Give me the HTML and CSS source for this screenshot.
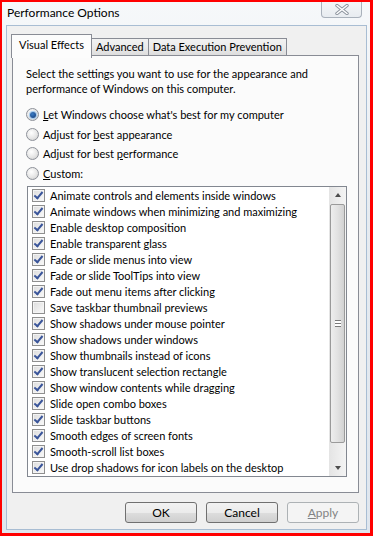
FILE: index.html
```html
<!DOCTYPE html>
<html lang="en">
<head>
    <meta charset="UTF-8">
    <meta name="viewport" content="width=device-width, initial-scale=1.0">
    <title>Performance Options</title>
    <link rel="stylesheet" href="styles.css">
</head>
<body>
    <div class="window">
        <div class="titlebar">
            <span class="title">Performance Options</span>
            <div class="close-btn">
                <svg width="14" height="11" viewBox="0 0 14 11">
                    <path d="M2 1.5 L12 9.5 M12 1.5 L2 9.5" stroke="#8a929c" stroke-width="3.4" stroke-linecap="round" fill="none"/>
                    <path d="M2 1.5 L12 9.5 M12 1.5 L2 9.5" stroke="#ffffff" stroke-width="1.6" stroke-linecap="round" fill="none"/>
                </svg>
            </div>
        </div>

        <div class="client">
            <div class="tabs">
                <div class="tab active">Visual Effects</div>
                <div class="tab">Advanced</div>
                <div class="tab">Data Execution Prevention</div>
            </div>

            <div class="panel">
                <p class="intro">Select the settings you want to use for the appearance and<br>performance of Windows on this computer.</p>

                <div class="options">
                    <div class="opt"><span class="radio checked"></span><span><u>L</u>et Windows choose what's best for my computer</span></div>
                    <div class="opt"><span class="radio"></span><span>Adjust for <u>b</u>est appearance</span></div>
                    <div class="opt"><span class="radio"></span><span>Adjust for best <u>p</u>erformance</span></div>
                    <div class="opt"><span class="radio"></span><span><u>C</u>ustom:</span></div>
                </div>

                <div class="listbox">
                    <div class="items">
                        <div class="item"><span class="cb on"></span>Animate controls and elements inside windows</div>
                        <div class="item"><span class="cb on"></span>Animate windows when minimizing and maximizing</div>
                        <div class="item"><span class="cb on"></span>Enable desktop composition</div>
                        <div class="item"><span class="cb on"></span>Enable transparent glass</div>
                        <div class="item"><span class="cb on"></span>Fade or slide menus into view</div>
                        <div class="item"><span class="cb on"></span>Fade or slide ToolTips into view</div>
                        <div class="item"><span class="cb on"></span>Fade out menu items after clicking</div>
                        <div class="item"><span class="cb"></span>Save taskbar thumbnail previews</div>
                        <div class="item"><span class="cb on"></span>Show shadows under mouse pointer</div>
                        <div class="item"><span class="cb on"></span>Show shadows under windows</div>
                        <div class="item"><span class="cb on"></span>Show thumbnails instead of icons</div>
                        <div class="item"><span class="cb on"></span>Show translucent selection rectangle</div>
                        <div class="item"><span class="cb on"></span>Show window contents while dragging</div>
                        <div class="item"><span class="cb on"></span>Slide open combo boxes</div>
                        <div class="item"><span class="cb on"></span>Slide taskbar buttons</div>
                        <div class="item"><span class="cb on"></span>Smooth edges of screen fonts</div>
                        <div class="item"><span class="cb on"></span>Smooth-scroll list boxes</div>
                        <div class="item"><span class="cb on"></span>Use drop shadows for icon labels on the desktop</div>
                    </div>
                    <div class="scrollbar">
                        <div class="sb-btn up"></div>
                        <div class="sb-track">
                            <div class="sb-thumb"><span class="grip"></span></div>
                        </div>
                        <div class="sb-btn down"></div>
                    </div>
                </div>
            </div>

            <div class="buttons">
                <button>OK</button>
                <button>Cancel</button>
                <button disabled><u>A</u>pply</button>
            </div>
        </div>
    </div>
</body>
</html>
```

FILE: styles.css
```css
html, body {
    height: 100%;
}
body {
    margin: 0;
    padding: 2px 3px 3px 2px;
    box-sizing: border-box;
    background: #f00;
    font-family: "Lato", "Liberation Sans", sans-serif;
    font-size: 11px;
    color: #000;
}
.window {
    height: 100%;
    display: flex;
    flex-direction: column;
    padding: 0 3px 3px 4px;
    box-sizing: border-box;
    background: linear-gradient(#f6f8fa, #e6ebf0 40%, #dfe6ee);
}
.titlebar {
    height: 23px;
    display: flex;
    align-items: flex-start;
    justify-content: space-between;
}
.title {
    margin-top: 3px;
    margin-left: 1px;
    font-size: 12px;
    line-height: 15px;
}
.close-btn {
    width: 39px;
    height: 15px;
    margin-right: 5px;
    border: 1px solid #a9b1bb;
    border-top: none;
    border-radius: 0 0 4px 4px;
    background: linear-gradient(#f4f6f8, #e8ecf0);
    display: flex;
    align-items: center;
    justify-content: center;
}
.client {
    flex: 1;
    display: flex;
    flex-direction: column;
    background: #f0f0f0;
    border: 1px solid #a8bdd3;
    padding: 8px 7px 0 5px;
}
.tabs {
    display: flex;
    height: 21px;
    position: relative;
    z-index: 1;
}
.tab {
    margin-top: 4px;
    height: 16px;
    line-height: 15px;
    padding: 0 4px;
    border: 1px solid #898c95;
    border-bottom: none;
    border-left: none;
    background: linear-gradient(#f2f2f2, #ebebeb 50%, #dddddd);
}
.tab.active {
    margin-top: 0;
    margin-left: -1px;
    height: 21px;
    padding: 2px 7px 0 7px;
    border-left: 1px solid #898c95;
    background: #fcfcfc;
}
.panel {
    flex: none;
    height: 438px;
    box-sizing: border-box;
    border: 1px solid #898c95;
    background: #fbfbfb;
    padding: 10px 11px 0 13px;
}
.intro {
    margin: 0;
    line-height: 15px;
}
.options {
    margin-top: 9px;
}
.opt {
    height: 19.5px;
    display: flex;
    align-items: center;
    gap: 4px;
}
.radio {
    width: 11px;
    height: 11px;
    flex: none;
    border-radius: 50%;
    border: 1px solid #8d9199;
    background: radial-gradient(circle at 40% 35%, #ffffff, #e6e6e6 55%, #c8c8c8);
    display: flex;
    align-items: center;
    justify-content: center;
}
.radio.checked::after {
    content: "";
    width: 6px;
    height: 6px;
    border-radius: 50%;
    background: radial-gradient(circle at 40% 35%, #3a7cc4, #123a7a);
    box-shadow: 0 0 1px 1px #9cc6ee;
}
.listbox {
    margin: 3px 0 0 1px;
    height: 291px;
    box-sizing: border-box;
    border: 1px solid #828790;
    background: #fff;
    display: flex;
}
.items {
    flex: 1;
    padding-left: 4px;
}
.item {
    height: 16px;
    display: flex;
    align-items: center;
    gap: 5px;
    white-space: nowrap;
}
.cb {
    width: 11px;
    height: 11px;
    flex: none;
    position: relative;
    border: 1px solid #8f8f8f;
    background: linear-gradient(135deg, #dcdcdc, #fafafa);
    box-shadow: inset 0 0 0 1px #f4f4f4;
}
.cb.on::after {
    content: "";
    position: absolute;
    left: 3px;
    top: 0px;
    width: 3px;
    height: 7px;
    border: solid #3a559a;
    border-width: 0 2px 2px 0;
    transform: rotate(40deg);
}
.scrollbar {
    width: 17px;
    display: flex;
    flex-direction: column;
    background: linear-gradient(90deg, #e4e4e4, #f4f4f4);
}
.sb-btn {
    height: 17px;
    display: flex;
    align-items: center;
    justify-content: center;
}
.sb-btn.up::before {
    content: "";
    border: 3.5px solid transparent;
    border-bottom: 4px solid #4d4d4d;
    margin-top: -4px;
}
.sb-btn.down::before {
    content: "";
    border: 3.5px solid transparent;
    border-top: 4px solid #4d4d4d;
    margin-top: 4px;
}
.sb-track {
    flex: 1;
    padding: 0 1px 16px;
}
.sb-thumb {
    height: 239px;
    box-sizing: border-box;
    border: 1px solid #9a9a9a;
    border-radius: 2px;
    background: linear-gradient(90deg, #eeeeee, #e2e2e2 50%, #d2d2d2);
    display: flex;
    align-items: center;
    justify-content: center;
}
.grip {
    width: 6px;
    height: 5px;
    border-top: 1px solid #7a7a7a;
    border-bottom: 1px solid #7a7a7a;
    background: linear-gradient(#fff 2px, #7a7a7a 2px, #7a7a7a 3px, #fff 3px);
}
.buttons {
    display: flex;
    justify-content: flex-end;
    gap: 9px;
    margin-top: 9px;
}
button {
    width: 72px;
    height: 21px;
    padding: 0;
    font-family: inherit;
    font-size: 12px;
    color: #000;
    border: 1px solid #707070;
    border-radius: 3px;
    background: linear-gradient(#f2f2f2, #ebebeb 50%, #dddddd 51%, #cfcfcf);
}
button:disabled {
    color: #838383;
    border-color: #adb2b5;
    background: #f4f4f4;
}
```
